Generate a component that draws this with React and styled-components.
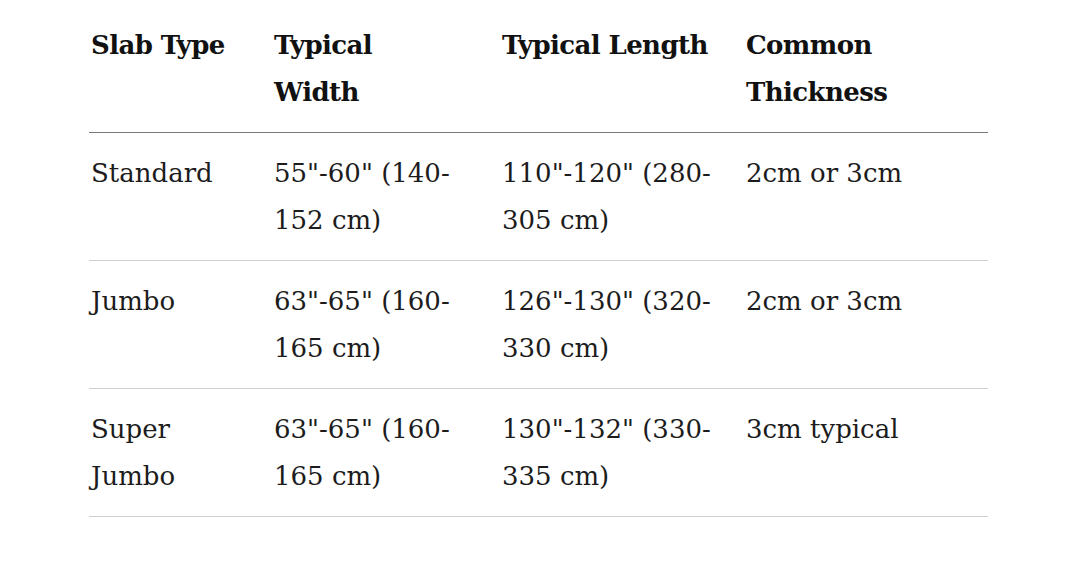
import React from 'react'
import styled, { createGlobalStyle } from 'styled-components'

const Global = createGlobalStyle`
  html, body {
    margin: 0;
    padding: 0;
    background: #fff;
  }
`

const Page = styled.div`
  padding: 5px 0 0 89px;
  font-family: "DejaVu Serif", "Liberation Serif", serif;
`

const Table = styled.table`
  width: 899px;
  border-collapse: collapse;
  table-layout: fixed;
  color: #1c1c1c;
`

const Head = styled.th`
  text-align: left;
  vertical-align: top;
  white-space: pre;
  font-weight: 700;
  font-size: 26px;
  line-height: 47px;
  letter-spacing: -0.6px;
  color: #111;
  padding: 17px 12px 16px 2px;
  border-bottom: 1px solid #7a7a7a;
`

const Cell = styled.td`
  vertical-align: top;
  white-space: pre;
  font-size: 26px;
  line-height: 47px;
  letter-spacing: 0;
  padding: 17px 12px 16px 2px;
  border-bottom: 1px solid #cfcfcf;
`

// line breaks follow the narrow columns of the original layout
const columns = [
  { title: 'Slab Type', width: 183 },
  { title: 'Typical\nWidth', width: 228 },
  { title: 'Typical Length', width: 244 },
  { title: 'Common\nThickness', width: 244 },
]

const rows = [
  ['Standard', '55"-60" (140-\n152 cm)', '110"-120" (280-\n305 cm)', '2cm or 3cm'],
  ['Jumbo', '63"-65" (160-\n165 cm)', '126"-130" (320-\n330 cm)', '2cm or 3cm'],
  ['Super\nJumbo', '63"-65" (160-\n165 cm)', '130"-132" (330-\n335 cm)', '3cm typical'],
]

export default function App() {
  return (
    <>
      <Global />
      <Page>
        <Table>
          <colgroup>
            {columns.map(c => <col key={c.title} style={{ width: c.width }} />)}
          </colgroup>
          <thead>
            <tr>
              {columns.map(c => <Head key={c.title}>{c.title}</Head>)}
            </tr>
          </thead>
          <tbody>
            {rows.map(r => (
              <tr key={r[0]}>
                {r.map((v, i) => <Cell key={i}>{v}</Cell>)}
              </tr>
            ))}
          </tbody>
        </Table>
      </Page>
    </>
  )
}
